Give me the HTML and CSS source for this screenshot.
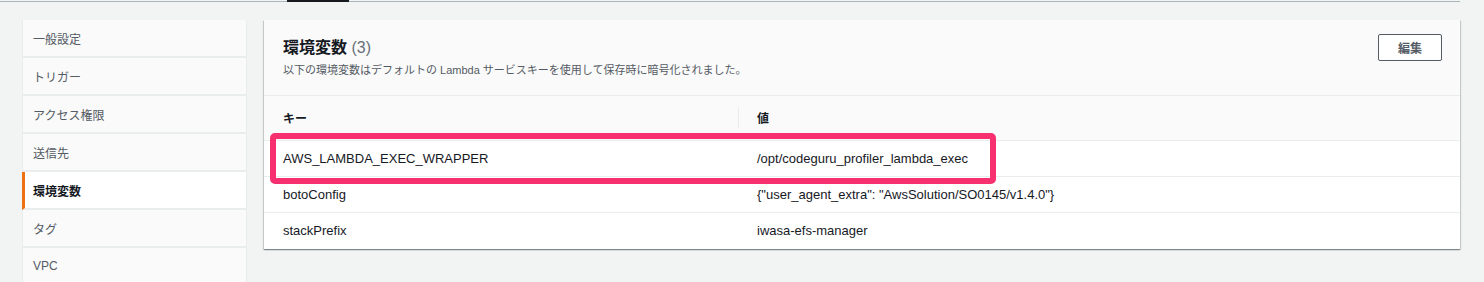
FILE: index.html
```html
<!DOCTYPE html>
<html lang="ja">
<head>
    <meta charset="UTF-8">
    <meta name="viewport" content="width=device-width, initial-scale=1.0">
    <title>環境変数 - Lambda</title>
    <link rel="stylesheet" href="styles.css">
</head>
<body>

    <!-- Tab strip (only the underline is visible) -->
    <div class="tabbar">
        <div class="tab-active"></div>
    </div>

    <div class="layout">
        <nav class="side-nav">
            <div class="nav-item">一般設定</div>
            <div class="nav-item">トリガー</div>
            <div class="nav-item">アクセス権限</div>
            <div class="nav-item">送信先</div>
            <div class="nav-item active">環境変数</div>
            <div class="nav-item">タグ</div>
            <div class="nav-item">VPC</div>
        </nav>

        <section class="panel">
            <div class="panel-header">
                <div class="panel-title">
                    <h2>環境変数 <span class="count">(3)</span></h2>
                    <p>以下の環境変数はデフォルトの Lambda サービスキーを使用して保存時に暗号化されました。</p>
                </div>
                <button class="edit-button">編集</button>
            </div>

            <table class="env-table">
                <colgroup>
                    <col class="col-key">
                    <col>
                </colgroup>
                <thead>
                    <tr>
                        <th>キー</th>
                        <th class="divided">値</th>
                    </tr>
                </thead>
                <tbody>
                    <tr>
                        <td>AWS_LAMBDA_EXEC_WRAPPER</td>
                        <td>/opt/codeguru_profiler_lambda_exec</td>
                    </tr>
                    <tr>
                        <td>botoConfig</td>
                        <td>{"user_agent_extra": "AwsSolution/SO0145/v1.4.0"}</td>
                    </tr>
                    <tr>
                        <td>stackPrefix</td>
                        <td>iwasa-efs-manager</td>
                    </tr>
                </tbody>
            </table>

            <!-- Annotation drawn over the first row -->
            <div class="highlight"></div>
        </section>
    </div>

</body>
</html>
```

FILE: styles.css
```css
/* Reset & body */
* {
    box-sizing: border-box;
    margin: 0;
    padding: 0;
}

body {
    font-family: "Liberation Sans", "Noto Sans CJK JP", sans-serif;
    background-color: #f2f3f3;
    color: #16191f;
    height: 282px;
    overflow: hidden;
}

/* Tab strip */
.tabbar {
    width: 1460px;
    height: 2px;
    border-bottom: 1px solid #aab7b8;
}

.tab-active {
    margin-left: 287px;
    width: 62px;
    height: 2px;
    background-color: #16191f;
}

/* Two column layout */
.layout {
    display: flex;
    gap: 17px;
    padding: 18px 24px 0 22px;
}

/* Side navigation */
.side-nav {
    width: 225px;
    flex-shrink: 0;
    background-color: #fafafa;
    border-left: 1px solid #eaeded;
    border-right: 1px solid #eaeded;
}

.nav-item {
    height: 38px;
    padding: 0 10px;
    display: flex;
    align-items: center;
    font-size: 12px;
    color: #545b64;
    border-bottom: 2px solid #eaeded;
}

.nav-item.active {
    background-color: #ffffff;
    color: #16191f;
    font-weight: 700;
    border-left: 3px solid #ec7211;
    margin-left: -1px;
    padding-left: 8px;
}

/* Main panel */
.panel {
    position: relative;
    flex-grow: 1;
    background-color: #ffffff;
    box-shadow: 0 1px 1px 0 rgba(0, 28, 36, 0.3), 1px 1px 1px 0 rgba(0, 28, 36, 0.15), -1px 1px 1px 0 rgba(0, 28, 36, 0.15);
    align-self: flex-start;
}

.panel-header {
    display: flex;
    justify-content: space-between;
    align-items: flex-start;
    height: 76px;
    padding: 14px 18px 0 19px;
    background-color: #fafafa;
    border-bottom: 1px solid #eaeded;
}

.panel-title {
    padding-top: 3px;
}

.panel-title h2 {
    font-size: 16px;
    line-height: 22px;
    font-weight: 700;
}

.panel-title .count {
    font-weight: 400;
    color: #687078;
}

.panel-title p {
    margin-top: 3px;
    font-size: 11px;
    line-height: 16px;
    color: #545b64;
}

.edit-button {
    width: 64px;
    height: 27px;
    font-family: inherit;
    font-size: 12px;
    font-weight: 700;
    color: #545b64;
    background-color: #ffffff;
    border: 1px solid #545b64;
    border-radius: 2px;
}

/* Table */
.env-table {
    width: 100%;
    border-collapse: collapse;
    table-layout: fixed;
    font-size: 13px;
}

.col-key {
    width: 474px;
}

.env-table th {
    height: 44px;
    padding: 0 19px;
    text-align: left;
    font-size: 12px;
    font-weight: 700;
    background-color: #fafafa;
    border-bottom: 1px solid #eaeded;
}

.env-table th.divided {
    position: relative;
}

.env-table th.divided::before {
    content: "";
    position: absolute;
    left: 0;
    top: 11px;
    height: 21px;
    border-left: 1px solid #eaeded;
}

.env-table td {
    height: 36px;
    padding: 0 19px;
    border-bottom: 1px solid #eaeded;
}

.env-table tr:last-child td {
    height: 37px;
    border-bottom: none;
}

/* Pink annotation box */
.highlight {
    position: absolute;
    left: 6px;
    top: 113px;
    width: 726px;
    height: 51px;
    border: 6px solid #f7316f;
    border-radius: 5px;
}
```
